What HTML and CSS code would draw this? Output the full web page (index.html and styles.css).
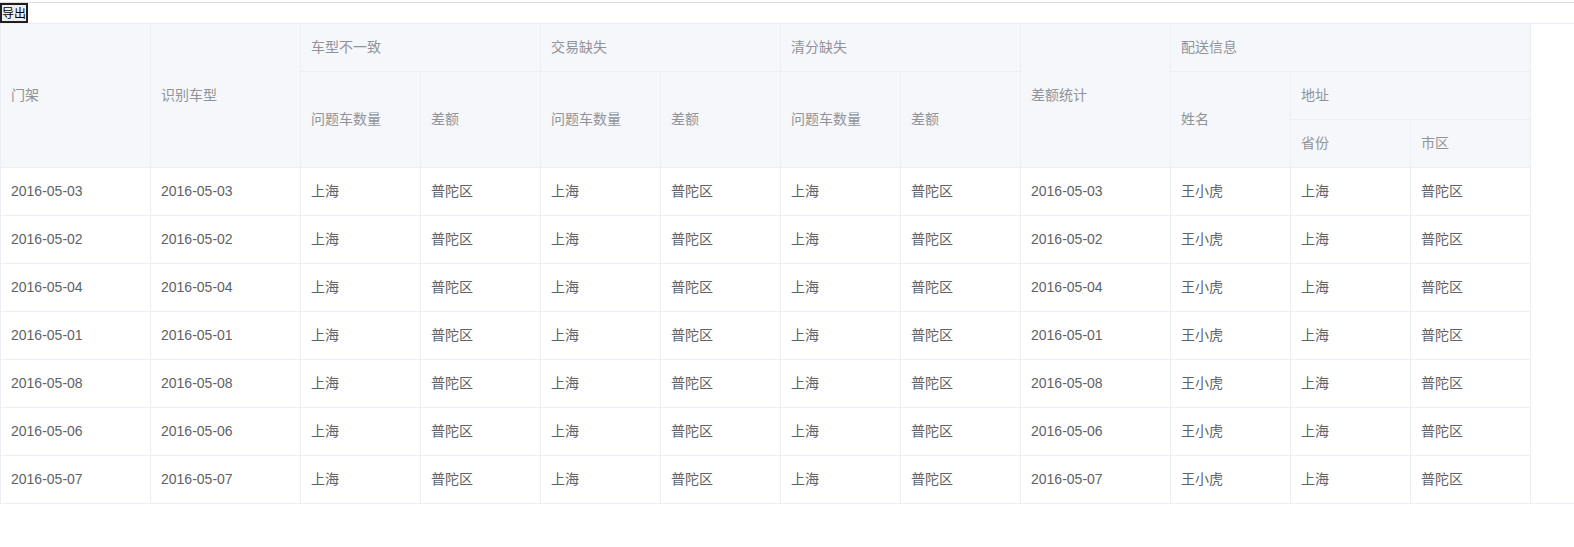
FILE: index.html
```html
<!DOCTYPE html>
<html lang="zh-CN">
<head>
<meta charset="utf-8">
<title>导出</title>
<link rel="stylesheet" href="styles.css">
</head>
<body>
<div class="topline"></div>
<button class="export-btn" type="button">导出</button>
<div class="table-wrap">
  <table class="data-table">
    <colgroup>
      <col class="w150"><col class="w150">
      <col class="w120"><col class="w120">
      <col class="w120"><col class="w120">
      <col class="w120"><col class="w120">
      <col class="w150">
      <col class="w120"><col class="w120"><col class="w120">
    </colgroup>
    <thead>
      <tr>
        <th rowspan="3">门架</th>
        <th rowspan="3">识别车型</th>
        <th colspan="2">车型不一致</th>
        <th colspan="2">交易缺失</th>
        <th colspan="2">清分缺失</th>
        <th rowspan="3">差额统计</th>
        <th colspan="3" class="last">配送信息</th>
      </tr>
      <tr>
        <th rowspan="2">问题车数量</th>
        <th rowspan="2">差额</th>
        <th rowspan="2">问题车数量</th>
        <th rowspan="2">差额</th>
        <th rowspan="2">问题车数量</th>
        <th rowspan="2">差额</th>
        <th rowspan="2">姓名</th>
        <th colspan="2">地址</th>
      </tr>
      <tr>
        <th>省份</th>
        <th>市区</th>
      </tr>
    </thead>
    <tbody>
      <tr><td>2016-05-03</td><td>2016-05-03</td><td>上海</td><td>普陀区</td><td>上海</td><td>普陀区</td><td>上海</td><td>普陀区</td><td>2016-05-03</td><td>王小虎</td><td>上海</td><td>普陀区</td></tr>
      <tr><td>2016-05-02</td><td>2016-05-02</td><td>上海</td><td>普陀区</td><td>上海</td><td>普陀区</td><td>上海</td><td>普陀区</td><td>2016-05-02</td><td>王小虎</td><td>上海</td><td>普陀区</td></tr>
      <tr><td>2016-05-04</td><td>2016-05-04</td><td>上海</td><td>普陀区</td><td>上海</td><td>普陀区</td><td>上海</td><td>普陀区</td><td>2016-05-04</td><td>王小虎</td><td>上海</td><td>普陀区</td></tr>
      <tr><td>2016-05-01</td><td>2016-05-01</td><td>上海</td><td>普陀区</td><td>上海</td><td>普陀区</td><td>上海</td><td>普陀区</td><td>2016-05-01</td><td>王小虎</td><td>上海</td><td>普陀区</td></tr>
      <tr><td>2016-05-08</td><td>2016-05-08</td><td>上海</td><td>普陀区</td><td>上海</td><td>普陀区</td><td>上海</td><td>普陀区</td><td>2016-05-08</td><td>王小虎</td><td>上海</td><td>普陀区</td></tr>
      <tr><td>2016-05-06</td><td>2016-05-06</td><td>上海</td><td>普陀区</td><td>上海</td><td>普陀区</td><td>上海</td><td>普陀区</td><td>2016-05-06</td><td>王小虎</td><td>上海</td><td>普陀区</td></tr>
      <tr><td>2016-05-07</td><td>2016-05-07</td><td>上海</td><td>普陀区</td><td>上海</td><td>普陀区</td><td>上海</td><td>普陀区</td><td>2016-05-07</td><td>王小虎</td><td>上海</td><td>普陀区</td></tr>
    </tbody>
  </table>
</div>
</body>
</html>
```

FILE: styles.css
```css
html, body {
  margin: 0;
  padding: 0;
  background: #fff;
}

body {
  font-family: "Liberation Sans", "Noto Sans CJK SC", sans-serif;
}

.topline {
  margin-top: 2px;
  border-top: 1px solid #dcdcdc;
}

.export-btn {
  display: block;
  margin: 0;
  padding: 0;
  height: 20px;
  width: 28px;
  font-family: "Noto Sans CJK SC", sans-serif;
  font-size: 12px;
  line-height: 16px;
  color: #000;
  background: #efefef;
  border: 2px solid #1f1f1f;
  border-radius: 0;
  text-align: center;
}

.table-wrap {
  border-top: 1px solid #ebeef5;
  border-left: 1px solid #ebeef5;
  border-bottom: 1px solid #ebeef5;
}

.data-table {
  table-layout: fixed;
  width: 1530px;
  border-collapse: separate;
  border-spacing: 0;
  font-size: 14px;
}

.w150 { width: 150px; }
.w120 { width: 120px; }

.data-table th,
.data-table td {
  padding: 12px 10px;
  line-height: 23px;
  text-align: left;
  vertical-align: middle;
  border-right: 1px solid #ebeef5;
  border-bottom: 1px solid #ebeef5;
  white-space: nowrap;
  overflow: hidden;
}

.data-table th {
  background: #f5f7fa;
  color: #909399;
  font-weight: 400;
}

.data-table td {
  color: #606266;
  background: #fff;
}

.data-table tbody tr:last-child td {
  border-bottom: none;
}
```
